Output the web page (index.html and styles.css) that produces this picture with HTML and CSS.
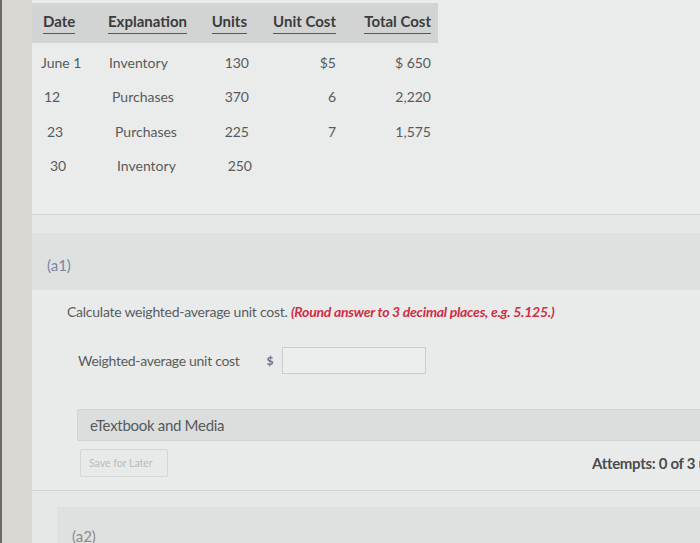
FILE: index.html
```html
<!DOCTYPE html>
<html>
<head>
<meta charset="utf-8">
<link rel="stylesheet" href="styles.css">
</head>
<body>
<div class="screen">
  <div class="bezel"></div>
  <div class="page">
    <section class="table-card">
      <table class="ledger">
        <colgroup>
          <col class="c-date"><col class="c-expl"><col class="c-units"><col class="c-unit"><col class="c-total">
        </colgroup>
        <thead>
          <tr>
            <th class="l"><span>Date</span></th>
            <th class="l"><span>Explanation</span></th>
            <th class="r"><span>Units</span></th>
            <th class="r"><span>Unit Cost</span></th>
            <th class="r"><span>Total Cost</span></th>
          </tr>
        </thead>
        <tbody>
          <tr><td class="l">June 1</td><td class="l">Inventory</td><td class="r">130</td><td class="r">$5</td><td class="r">$ 650</td></tr>
          <tr><td class="l i1">12</td><td class="l i1">Purchases</td><td class="r">370</td><td class="r">6</td><td class="r">2,220</td></tr>
          <tr><td class="l i2">23</td><td class="l i2">Purchases</td><td class="r">225</td><td class="r">7</td><td class="r">1,575</td></tr>
          <tr><td class="l i3">30</td><td class="l i3">Inventory</td><td class="r i4">250</td><td class="r"></td><td class="r"></td></tr>
        </tbody>
      </table>
    </section>

    <section class="part">
      <div class="part-head">(a1)</div>
      <div class="part-body">
        <p class="prompt">Calculate weighted-average unit cost. <em class="hint">(Round answer to 3 decimal places, e.g. 5.125.)</em></p>
        <div class="inner">
          <div class="answer-row">
            <span class="label">Weighted-average unit cost</span>
            <span class="dollar">$</span>
            <span class="input"></span>
          </div>
          <div class="media">eTextbook and Media</div>
          <div class="footer">
            <button class="save">Save for Later</button>
            <span class="attempts">Attempts: 0 of 3 used</span>
          </div>
        </div>
      </div>
    </section>

    <section class="part part2">
      <div class="part-head gray">(a2)</div>
    </section>
  </div>
</div>
</body>
</html>
```

FILE: styles.css
```css
html, body {
  margin: 0;
  padding: 0;
  overflow: hidden;
  background: #e6e8e8;
}
body {
  width: 700px;
  height: 543px;
  font-family: Lato, "Open Sans", sans-serif;
}
.screen {
  display: flex;
  width: 700px;
  height: 543px;
  overflow: hidden;
  background: #e6e8e8;
}
.bezel {
  flex: 0 0 32px;
  background: #d9d7d2;
  border-left: 2px solid #6a6965;
  box-sizing: border-box;
}
.page {
  flex: 0 0 720px;
  display: flex;
  flex-direction: column;
}
.page > * { flex-shrink: 0; }
.table-card {
  height: 215px;
  box-sizing: border-box;
  padding-top: 3px;
  background: #eaecec;
  border-bottom: 1px solid #d2d4d4;
}
.ledger {
  border-collapse: collapse;
  table-layout: fixed;
  width: 406px;
}
.c-date { width: 65px; }
.c-expl { width: 103px; }
.c-units { width: 58px; }
.c-unit { width: 87px; }
.c-total { width: 93px; }
.ledger thead tr {
  background: #d2d3d3;
  height: 40px;
}
.ledger th {
  font-weight: 700;
  font-size: 15px;
  color: #3b3c3c;
  padding: 0;
}
.ledger th span {
  display: inline-block;
  padding-bottom: 3px;
  border-bottom: 1.5px solid #55585a;
}
.ledger th.l { text-align: left; padding-left: 11px; }
.ledger th.r { text-align: right; }
.ledger th:nth-child(3) { padding-right: 11px; }
.ledger th:nth-child(4) { padding-right: 9px; }
.ledger th:nth-child(5) { padding-right: 7px; }
.ledger tbody tr { height: 34.5px; }
.ledger tbody tr:first-child { height: 36.5px; }
.ledger tbody tr:first-child td { padding-top: 2px; }
.ledger td {
  font-size: 14px;
  color: #585a5a;
  padding: 0;
}
.ledger td.l { padding-left: 9px; }
.ledger td:nth-child(2).l { padding-left: 12px; }
.ledger td.i1 { padding-left: 12px; }
.ledger td:nth-child(2).i1 { padding-left: 15px; }
.ledger td.i2 { padding-left: 15px; }
.ledger td:nth-child(2).i2 { padding-left: 18px; }
.ledger td.i3 { padding-left: 18px; }
.ledger td:nth-child(2).i3 { padding-left: 20px; }
.ledger td.r { text-align: right; }
.ledger td:nth-child(3) { padding-right: 9px; }
.ledger td:nth-child(3).i4 { padding-right: 6px; }
.ledger td:nth-child(4) { padding-right: 9px; }
.ledger td:nth-child(5) { padding-right: 7px; }

.part { margin-top: 18px; }
.part-head {
  height: 57px;
  box-sizing: border-box;
  padding: 6px 0 0 15px;
  display: flex;
  align-items: center;
  background: #dfe1e1;
  font-size: 15px;
  color: #7389a2;
}
.part-head.gray { color: #8a8b8b; }
.part-body {
  background: #e9ebeb;
  border-bottom: 1px solid #d3d5d5;
  padding: 13px 0 13px 35px;
}
.prompt {
  margin: 0;
  font-size: 14px;
  line-height: 18px;
  color: #5a5c5c;
  letter-spacing: -0.25px;
  white-space: nowrap;
}
.hint {
  color: #cf2d44;
  font-weight: 700;
}
.inner { padding-left: 10px; }
.answer-row {
  margin-top: 26px;
  display: flex;
  align-items: center;
  height: 27px;
}
.label {
  font-size: 14px;
  color: #5a5c5c;
  letter-spacing: -0.3px;
  padding-left: 1px;
}
.dollar {
  margin-left: 27px;
  font-size: 12px;
  color: #6e7070;
  font-weight: 700;
}
.input {
  margin-left: 8px;
  width: 144px;
  height: 27px;
  box-sizing: border-box;
  border: 1px solid #c9cdcd;
  background: #eceeee;
}
.media {
  margin-top: 35px;
  height: 32px;
  box-sizing: border-box;
  display: flex;
  align-items: center;
  padding-left: 12px;
  background: #dcdede;
  border: 1px solid #d2d4d4;
  border-radius: 2px;
  font-size: 15px;
  color: #56595a;
  letter-spacing: -0.3px;
}
.footer {
  margin-top: 8px;
  display: flex;
  align-items: center;
}
.save {
  margin-left: 3px;
  width: 88px;
  height: 28px;
  border: 1px solid #d6d8d8;
  background: #e8eaea;
  border-radius: 2px;
  font-family: Lato, sans-serif;
  font-size: 10.5px;
  color: #b9bcbc;
  padding: 0 0 0 8px;
  text-align: left;
}
.attempts {
  margin-left: 424px;
  font-size: 15px;
  font-weight: 700;
  color: #4a4c4d;
  letter-spacing: -0.3px;
  white-space: nowrap;
}
.part2 { margin-top: 16px; margin-left: 25px; }
.part2 .part-head { padding-top: 0; }
```
